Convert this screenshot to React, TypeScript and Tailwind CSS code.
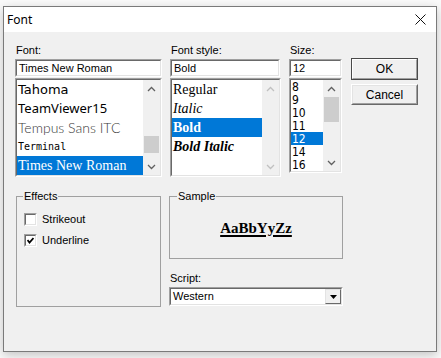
import React from 'react';

const sans = "font-['Liberation_Sans',Arial,sans-serif]";

const Sunken = ({ className = '', children }: { className?: string; children?: React.ReactNode }) => (
  <div className={`border border-t-[#a0a0a0] border-l-[#a0a0a0] border-r-white border-b-white ${className}`}>
    <div className="flex h-full border border-t-[#696969] border-l-[#696969] border-r-[#e3e3e3] border-b-[#e3e3e3] bg-white overflow-hidden">
      {children}
    </div>
  </div>
);

const Chevron = ({ up, color = '#606060' }: { up?: boolean; color?: string }) => (
  <svg width="9" height="6" viewBox="0 0 9 6">
    <polyline
      points={up ? '1,5 4.5,1.5 8,5' : '1,1 4.5,4.5 8,1'}
      fill="none"
      stroke={color}
      strokeWidth="1.3"
    />
  </svg>
);

const ScrollBar = ({
  thumbTop,
  thumbHeight,
  disabled,
}: {
  thumbTop?: number;
  thumbHeight?: number;
  disabled?: boolean;
}) => (
  <div className="flex w-[17px] shrink-0 flex-col bg-[#f0f0f0]">
    <div className="flex h-[17px] items-center justify-center">
      <Chevron up color={disabled ? '#c0c0c0' : '#606060'} />
    </div>
    <div className="relative flex-1">
      {thumbHeight ? (
        <div className="mx-[1px] bg-[#cdcdcd]" style={{ marginTop: thumbTop, height: thumbHeight }} />
      ) : null}
    </div>
    <div className="flex h-[17px] items-center justify-center">
      <Chevron color={disabled ? '#c0c0c0' : '#606060'} />
    </div>
  </div>
);

const fontItems = [
  { name: 'Tahoma', cls: "font-['DejaVu_Sans',sans-serif] text-[13px]" },
  { name: 'TeamViewer15', cls: "font-['Noto_Sans',sans-serif] text-[13px]" },
  { name: 'Tempus Sans ITC', cls: "font-['Lato',sans-serif] font-light text-[14px] text-[#3a3a3a]" },
  { name: 'Terminal', cls: "font-['DejaVu_Sans_Mono',monospace] text-[10px]" },
  { name: 'Times New Roman', cls: "font-['Liberation_Serif',serif] text-[14px]", selected: true },
];

const styleItems = [
  { name: 'Regular', cls: '' },
  { name: 'Italic', cls: 'italic' },
  { name: 'Bold', cls: 'font-bold', selected: true },
  { name: 'Bold Italic', cls: 'font-bold italic' },
];

const sizes = ['8', '9', '10', '11', '12', '14', '16'];

const Button = ({ label, isDefault }: { label: string; isDefault?: boolean }) =>
  isDefault ? (
    <div className="h-[22px] border border-[#4a4a4a]">
      <div className="flex h-full items-center justify-center border border-t-white border-l-white border-r-[#a0a0a0] border-b-[#a0a0a0] bg-[#f0f0f0] text-[12px]">
        {label}
      </div>
    </div>
  ) : (
    <div className="h-[21px] border border-t-white border-l-white border-r-[#696969] border-b-[#696969]">
      <div className="flex h-full items-center justify-center border border-t-[#e3e3e3] border-l-[#e3e3e3] border-r-[#a0a0a0] border-b-[#a0a0a0] bg-[#f0f0f0] text-[12px]">
        {label}
      </div>
    </div>
  );

const Checkbox = ({ checked }: { checked?: boolean }) => (
  <div className="h-[13px] w-[13px] border border-t-[#a0a0a0] border-l-[#a0a0a0] border-r-white border-b-white">
    <div className="flex h-full items-center justify-center border border-t-[#696969] border-l-[#696969] border-r-[#e3e3e3] border-b-[#e3e3e3] bg-white">
      {checked && (
        <svg width="7" height="7" viewBox="0 0 7 7">
          <polyline points="0.5,3 2.5,5.5 6.5,1" fill="none" stroke="#000" strokeWidth="1.8" />
        </svg>
      )}
    </div>
  </div>
);

export default function App() {
  return (
    <div className={`h-[358px] w-[441px] overflow-hidden bg-[#fafafa] pl-[3px] pt-[6px] text-black ${sans}`}>
      <div className="h-[346px] w-[434px] border border-[#7a7a7a] bg-[#f0f0f0] shadow-[0_3px_10px_rgba(0,0,0,0.22)]">
        {/* title bar */}
        <div className="flex h-[25px] items-center justify-between bg-white pl-[3px] pr-[10px]">
          <span className="font-['Noto_Sans',sans-serif] text-[12px]">Font</span>
          <svg width="11" height="11" viewBox="0 0 11 11">
            <path d="M0.5 0.5 L10.5 10.5 M10.5 0.5 L0.5 10.5" stroke="#111" strokeWidth="1" />
          </svg>
        </div>

        <div className="pl-[11px] pt-[12px] text-[11px]">
          {/* top row */}
          <div className="flex items-start">
            <div className="w-[147px]">
              <div className="h-[13px] pl-[1px] leading-[13px]">Font:</div>
              <Sunken className="mt-[2px] h-[18px]">
                <span className="pl-[2px] text-[11px] leading-[14px]">Times New Roman</span>
              </Sunken>
              <Sunken className="mt-[1px] h-[99px]">
                <div className="flex-1">
                  {fontItems.map((f) => (
                    <div
                      key={f.name}
                      className={`flex h-[19px] items-center whitespace-nowrap pl-[1px] leading-none ${f.cls} ${
                        f.selected ? 'bg-[#0078d7] text-white' : ''
                      }`}
                    >
                      {f.name}
                    </div>
                  ))}
                </div>
                <ScrollBar thumbTop={39} thumbHeight={17} />
              </Sunken>
            </div>

            <div className="ml-[8px] w-[111px]">
              <div className="h-[13px] pl-[1px] leading-[13px]">Font style:</div>
              <Sunken className="mt-[2px] h-[18px] w-[110px]">
                <span className="pl-[2px] leading-[14px]">Bold</span>
              </Sunken>
              <Sunken className="mt-[1px] h-[99px]">
                <div className="flex-1 font-['Liberation_Serif',serif] text-[14px]">
                  {styleItems.map((s) => (
                    <div
                      key={s.name}
                      className={`flex h-[19px] items-center whitespace-nowrap pl-[1px] leading-none ${s.cls} ${
                        s.selected ? 'bg-[#0078d7] text-white' : ''
                      }`}
                    >
                      {s.name}
                    </div>
                  ))}
                </div>
                <ScrollBar disabled />
              </Sunken>
            </div>

            <div className="ml-[8px] w-[53px]">
              <div className="h-[13px] pl-[1px] leading-[13px]">Size:</div>
              <Sunken className="mt-[2px] h-[18px]">
                <span className="pl-[2px] leading-[14px]">12</span>
              </Sunken>
              <Sunken className="mt-[1px] h-[95px]">
                <div className="flex-1 font-['Liberation_Sans_Narrow','DejaVu_Sans_Condensed',sans-serif] text-[12px]">
                  {sizes.map((s) => (
                    <div
                      key={s}
                      className={`flex h-[13px] items-center pl-[1px] leading-[12px] ${
                        s === '12' ? 'bg-[#0078d7] text-white' : ''
                      }`}
                    >
                      {s}
                    </div>
                  ))}
                </div>
                <ScrollBar thumbTop={0} thumbHeight={25} />
              </Sunken>
            </div>

            <div className="ml-[9px] mt-[14px] flex w-[67px] flex-col gap-[4px]">
              <Button label="OK" isDefault />
              <Button label="Cancel" />
            </div>
          </div>

          {/* bottom row */}
          <div className="mt-[13px] flex items-start">
            <fieldset className="ml-[1px] h-[117px] w-[145px] border border-[#a0a0a0]">
              <legend className="ml-[6px] px-[1px] leading-[13px]">Effects</legend>
              <div className="flex flex-col gap-[8px] pl-[7px] pt-[10px] leading-[13px]">
                <div className="flex h-[13px] items-center gap-[5px]">
                  <Checkbox />
                  <span>Strikeout</span>
                </div>
                <div className="flex h-[13px] items-center gap-[5px]">
                  <Checkbox checked />
                  <span>Underline</span>
                </div>
              </div>
            </fieldset>

            <div className="ml-[8px] w-[174px]">
              <fieldset className="h-[69px] border border-[#a0a0a0]">
                <legend className="ml-[7px] px-[1px] leading-[13px]">Sample</legend>
                <div className="flex h-[50px] items-center justify-center">
                  <span className="font-['Liberation_Serif',serif] text-[15px] font-bold underline decoration-2 underline-offset-2">
                    AaBbYyZz
                  </span>
                </div>
              </fieldset>
              <div className="mt-[13px] h-[13px] pl-[1px] leading-[13px]">Script:</div>
              <Sunken className="mt-[2px] h-[19px]">
                <span className="flex-1 pl-[2px] leading-[15px]">Western</span>
                <div className="h-[15px] w-[16px] border border-t-[#e3e3e3] border-l-[#e3e3e3] border-r-[#696969] border-b-[#696969] bg-[#f0f0f0]">
                  <div className="flex h-full items-center justify-center">
                    <svg width="7" height="4" viewBox="0 0 7 4">
                      <polygon points="0,0 7,0 3.5,4" fill="#000" />
                    </svg>
                  </div>
                </div>
              </Sunken>
            </div>
          </div>
        </div>
      </div>
    </div>
  );
}
